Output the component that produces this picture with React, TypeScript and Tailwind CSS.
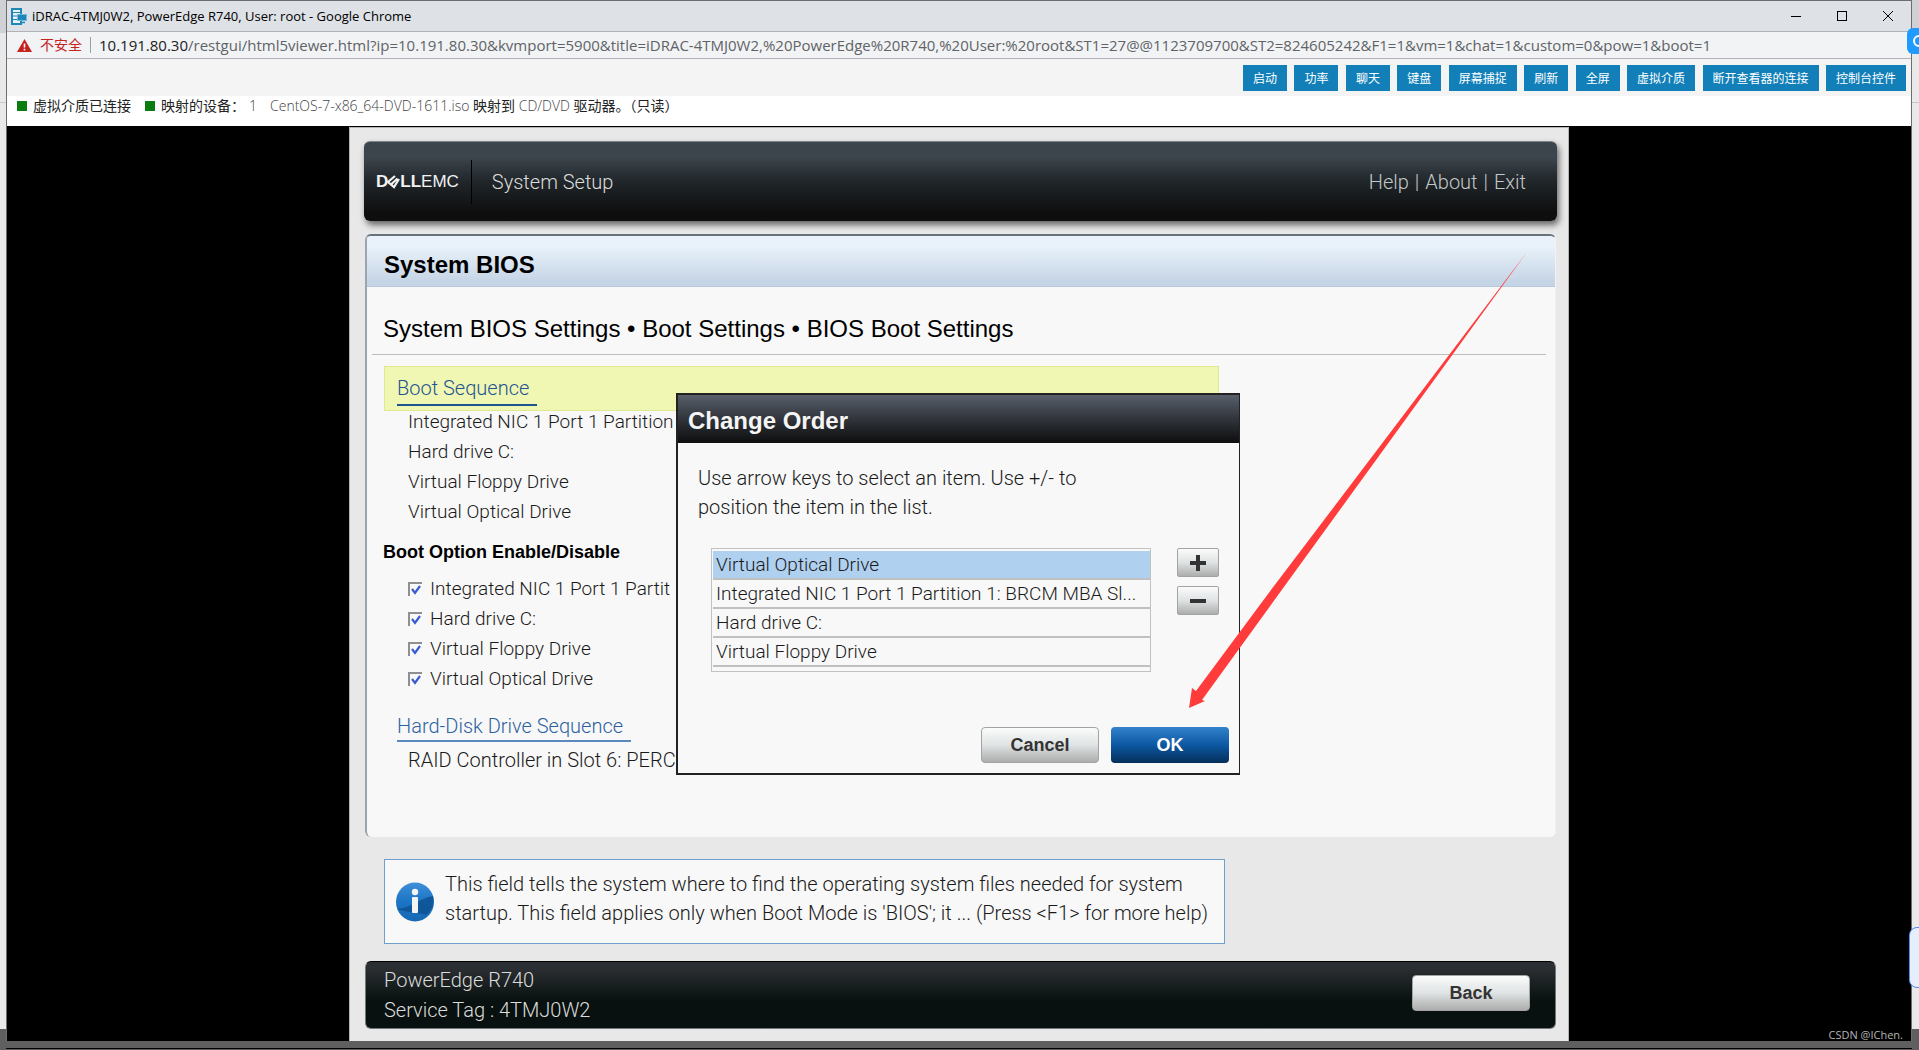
import React from "react";

const actions = ["启动", "功率", "聊天", "键盘", "屏幕捕捉", "刷新", "全屏", "虚拟介质", "断开查看器的连接", "控制台控件"];

const sequence = ["Integrated NIC 1 Port 1 Partition", "Hard drive C:", "Virtual Floppy Drive", "Virtual Optical Drive"];

const options = ["Integrated NIC 1 Port 1 Partit", "Hard drive C:", "Virtual Floppy Drive", "Virtual Optical Drive"];

const order = [
  "Virtual Optical Drive",
  "Integrated NIC 1 Port 1 Partition 1: BRCM MBA Sl...",
  "Hard drive C:",
  "Virtual Floppy Drive",
];

const silver =
  "border border-[#a3a3a3] bg-linear-to-b from-[#fbfbfb] via-[#dfe3e3] to-[#adadad]";

function TitleBar() {
  return (
    <header className="flex h-[30px] items-center bg-[#dee1e6] pl-1 text-black">
      <svg width="16" height="17" viewBox="0 0 16 17" aria-hidden="true">
        <path d="M1 1h9v15H1z" fill="#e9f4fa" stroke="#1f86b8" strokeWidth="2" />
        <path d="M2 4.500h7M2 8h5M2 11.500h5" stroke="#1f86b8" strokeWidth="1.200" />
        <rect x="6.500" y="6.500" width="9" height="6" fill="#1f86b8" stroke="#6db8dc" />
        <path d="M9 14.500h5" stroke="#1f86b8" strokeWidth="1.500" />
      </svg>
      <h1 className="ml-[5px] font-['Open_Sans','Noto_Sans_CJK_SC',sans-serif] text-[13px] leading-4">
        iDRAC-4TMJ0W2, PowerEdge R740, User: root - Google Chrome
      </h1>
      <div className="ml-auto flex">
        <button aria-label="Minimize" className="grid h-[30px] w-[46px] place-items-center">
          <svg width="10" height="10" viewBox="0 0 10 10"><path d="M0 5.500h10" stroke="#000" /></svg>
        </button>
        <button aria-label="Maximize" className="grid h-[30px] w-[46px] place-items-center">
          <svg width="10" height="10" viewBox="0 0 10 10"><rect x=".5" y=".5" width="9" height="9" fill="none" stroke="#000" /></svg>
        </button>
        <button aria-label="Close" className="grid h-[30px] w-[46px] place-items-center">
          <svg width="10" height="10" viewBox="0 0 10 10"><path d="M0 0l10 10M10 0L0 10" stroke="#000" /></svg>
        </button>
      </div>
    </header>
  );
}

function AddressBar() {
  return (
    <div className="flex h-[28px] items-center whitespace-nowrap border-y border-[#b0b2b5] bg-[#f1f3f4] pl-[10px] font-['Open_Sans','Noto_Sans_CJK_SC',sans-serif] text-[14px] leading-5">
      <svg width="15" height="13" viewBox="0 0 15 13" aria-hidden="true">
        <path d="M7.500 0L15 13H0z" fill="#c5221f" />
        <path d="M7.500 4.500v4M7.500 9.800v1.600" stroke="#fff" strokeWidth="1.600" />
      </svg>
      <span className="ml-2 text-[#c5221f]">不安全</span>
      <span className="mx-2 h-4 w-px bg-[#9aa0a6]" />
      <span className="text-[15px] text-[#5f6368]">
        <span className="text-[#202124]">10.191.80.30</span>
        /restgui/html5viewer.html?ip=10.191.80.30&amp;kvmport=5900&amp;title=iDRAC-4TMJ0W2,%20PowerEdge%20R740,%20User:%20root&amp;ST1=27@@1123709700&amp;ST2=824605242&amp;F1=1&amp;vm=1&amp;chat=1&amp;custom=0&amp;pow=1&amp;boot=1
      </span>
    </div>
  );
}

function Toolbar() {
  return (
    <nav className="flex h-[37px] justify-end bg-[#f4f4f4] pr-[5px] pt-[6px]">
      <div className="flex w-[663px] justify-between">
        {actions.map((a) => (
          <button key={a} className="h-[26px] bg-[#127fb9] px-[10px] font-['Noto_Sans_CJK_SC',sans-serif] text-[12px] leading-4 text-white">
            {a}
          </button>
        ))}
      </div>
    </nav>
  );
}

function MediaStatus() {
  return (
    <div className="flex h-[30px] bg-white pl-[10px] font-['Open_Sans','Noto_Sans_CJK_SC',sans-serif] text-[14px] leading-5 text-[#222]">
      <span className="mr-[6px] mt-[5px] size-[10px] bg-[#0b7d10]" />
      <span>虚拟介质已连接</span>
      <span className="ml-[14px] mr-[6px] mt-[5px] size-[10px] bg-[#0b7d10]" />
      <span>映射的设备：</span>
      <span className="ml-1 font-light text-[#444]">1</span>
      <span className="ml-[13px]">
        <span className="font-light text-[#444]">CentOS-7-x86_64-DVD-1611.iso</span> 映射到{" "}
        <span className="font-light text-[#444]">CD/DVD</span> 驱动器。（只读）
      </span>
    </div>
  );
}

function DellLogo() {
  return (
    <span aria-label="DELL EMC" className="flex items-center font-['Liberation_Sans',sans-serif] text-[17px] leading-5 text-[#f2f2f2]">
      <span className="font-bold">D</span>
      <svg width="16" height="14" viewBox="0 0 16 14" aria-hidden="true" className="-mx-0.5">
        <path d="M13 4L8 12L2 7L9 1M5 9.500L11.500 3.500" stroke="#f2f2f2" strokeWidth="2.200" fill="none" />
      </svg>
      <span className="font-bold">LL</span>
      <span className="font-normal">EMC</span>
    </span>
  );
}

function SetupHeader() {
  return (
    <div className="flex h-20 items-center rounded-md border-t border-[#7e8487] bg-linear-to-b from-[#3c454c] from-20% via-[#20262a] via-50% to-[#0e0e0e] to-90% pl-3 pr-[31px] text-[20px] leading-6 text-[#dcdcdc] shadow-[2px_4px_6px_#00000090]">
      <DellLogo />
      <span className="ml-3 h-11 w-px bg-black" />
      <span className="ml-5">System Setup</span>
      <nav className="ml-auto flex gap-[6px] text-[#c4c8c8]">
        <a href="#help">Help</a>|<a href="#about">About</a>|<a href="#exit">Exit</a>
      </nav>
    </div>
  );
}

function BiosPanel() {
  return (
    <section className="mx-px mt-[13px] h-[603px] overflow-hidden rounded-md border-l-2 border-r border-t-2 border-l-[#9aa5b0] border-r-[#f2f2f2] border-t-[#66727e] bg-[#f8f8f8]">
      <h2 className="flex h-[51px] items-center border-b border-[#b9c7da] bg-linear-to-b from-[#e9f2fa] from-20% to-[#c6d5e6] to-90% pl-[17px] pt-2 font-['Liberation_Sans',sans-serif] text-[24px] font-bold leading-7 text-black">
        System BIOS
      </h2>
      <h3 className="ml-[5px] mr-[9px] h-[68px] border-b border-[#bdbdbd] pl-[11px] pt-[28px] font-['Liberation_Sans',sans-serif] text-[24px] font-normal leading-7 text-black">
        System BIOS Settings • Boot Settings • BIOS Boot Settings
      </h3>
      <div className="ml-[17px] mr-[336px] mt-[11px] h-[45px] border border-[#dfe98f] bg-[#f0f7b2] pl-3 pt-[9px]">
        <a href="#boot-sequence" className="inline-block border-b-2 border-[#1d5491] pb-1 pr-2 leading-6 text-[#1d5491]">Boot Sequence</a>
      </div>
      <ul className="-mt-1 ml-[41px] whitespace-nowrap text-[19px] leading-[30px]">
        {sequence.map((s) => <li key={s}>{s}</li>)}
      </ul>
      <h4 className="ml-4 mt-[10px] font-['Liberation_Sans',sans-serif] text-[18px] font-bold leading-[30px] text-black">Boot Option Enable/Disable</h4>
      <div className="ml-[41px] mt-[7px] text-[19px]">
        {options.map((s, i) => (
          <label key={s} className="relative flex h-[30px] items-center gap-2 whitespace-nowrap">
            <input type="checkbox" defaultChecked name={`option-${i}`} className="peer sr-only" />
            <span className="grid size-[14px] shrink-0 place-items-center border-l-2 border-t-2 border-[#8f8f8f] text-transparent peer-checked:text-[#3a5bd0]">
              <svg width="10" height="10" viewBox="0 0 10 10" aria-hidden="true">
                <path d="M1 4L4 8L9 1" fill="none" stroke="currentColor" strokeWidth="2.200" />
              </svg>
            </span>
            {s}
          </label>
        ))}
      </div>
      <div className="ml-[30px] mt-[18px]">
        <a href="#hard-disk" className="inline-block border-b-2 border-[#5b88bd] pr-2 leading-7 text-[#2c629f]">Hard-Disk Drive Sequence</a>
      </div>
      <p className="ml-[41px] mt-[3px] whitespace-nowrap leading-[30px]">RAID Controller in Slot 6: PERC</p>
    </section>
  );
}

function HelpBox() {
  return (
    <aside className="ml-5 mr-[332px] mt-[22px] flex h-[85px] items-center border border-[#6f9fcb] bg-[#f8f8f8] pl-[11px]">
      <svg width="38" height="40" viewBox="0 0 38 40" aria-hidden="true" className="shrink-0">
        <defs>
          <linearGradient id="ball" x1="0" y1="0" x2="0" y2="1">
            <stop offset="0" stopColor="#3e8fd8" />
            <stop offset=".5" stopColor="#1b74c4" />
            <stop offset="1" stopColor="#1768b4" />
          </linearGradient>
        </defs>
        <ellipse cx="19" cy="20" rx="19" ry="19.500" fill="url(#ball)" />
        <path d="M1 27C16 26 24 16 37 14C39 24 34 30 30 33C20 30 8 30 1 27z" fill="#0c4f90" opacity=".8" />
        <circle cx="19" cy="10" r="3.200" fill="#f4f4f4" />
        <rect x="16" y="15" width="6" height="16" rx="1" fill="#f4f4f4" />
      </svg>
      <p className="-mt-[6px] ml-[11px] leading-[29px]">
        This field tells the system where to find the operating system files needed for system<br />
        startup. This field applies only when Boot Mode is 'BIOS'; it ... (Press &lt;F1&gt; for more help)
      </p>
    </aside>
  );
}

function SetupFooter() {
  return (
    <footer className="mx-px mt-[17px] flex h-[68px] items-center rounded-md border border-[#70787a] border-t-black bg-linear-to-b from-[#2b2e32] from-10% to-[#08110f] to-60% pl-[18px] pr-[25px] text-[#dcdcdc]">
      <p className="leading-[30px]">
        PowerEdge R740<br />Service Tag : 4TMJ0W2
      </p>
      <button className={`mb-1 ml-auto h-9 w-[118px] rounded-sm font-['Liberation_Sans',sans-serif] text-[18px] font-bold leading-6 text-[#333] ${silver}`}>Back</button>
    </footer>
  );
}

function ChangeOrderDialog() {
  return (
    <div role="dialog" aria-label="Change Order" className="absolute left-[326px] top-[265px] w-[564px] border-2 border-r border-[#222] bg-[#f8f8f8]">
      <h2 className="flex h-12 items-center bg-linear-to-b from-[#59606c] to-[#0d0e0f] pl-[10px] pt-1 font-['Liberation_Sans',sans-serif] text-[24px] font-bold leading-7 text-[#f5f5f5]">
        Change Order
      </h2>
      <p className="ml-5 mt-[21px] leading-[29px]">
        Use arrow keys to select an item. Use +/- to<br />position the item in the list.
      </p>
      <div className="ml-[33px] mr-5 mt-[26px] flex items-start justify-between">
        <ul className="w-[440px] border border-[#c2c2c2] pb-1 pl-px pt-[2px] text-[19px]">
          {order.map((o, i) => (
            <li key={o} className={`h-[29px] whitespace-nowrap border-b-2 border-[#c0c0c0] px-[3px] leading-[27px] ${i === 0 ? "bg-[#b0d0ef]" : ""}`}>{o}</li>
          ))}
        </ul>
        <div className="flex flex-col gap-[9px]">
          <button aria-label="Move up" className={`grid h-[29px] w-[42px] place-items-center rounded-xs ${silver}`}>
            <svg width="16" height="16" viewBox="0 0 16 16"><path d="M0 8h16M8 0v16" stroke="#333" strokeWidth="4" /></svg>
          </button>
          <button aria-label="Move down" className={`grid h-[29px] w-[42px] place-items-center rounded-xs ${silver}`}>
            <svg width="16" height="16" viewBox="0 0 16 16"><path d="M0 8h16" stroke="#333" strokeWidth="4" /></svg>
          </button>
        </div>
      </div>
      <div className="mb-[10px] mr-[10px] mt-[55px] flex justify-end gap-3 font-['Liberation_Sans',sans-serif] text-[18px] font-bold leading-6">
        <button className={`h-9 w-[118px] rounded-sm text-[#333] ${silver}`}>Cancel</button>
        <button className="h-9 w-[118px] rounded-sm bg-linear-to-b from-[#3282cc] via-[#0c58a3] to-[#062f5a] text-white">OK</button>
      </div>
    </div>
  );
}

function Pointer() {
  return (
    <svg className="pointer-events-none absolute left-[839px] top-[124px]" width="338" height="456" viewBox="0 0 338 456" aria-hidden="true">
      <path d="M338 0L84 350L13 448L16 449L0 456L3 436L7 439L79 342z" fill="#ff3b3b" />
    </svg>
  );
}

export default function App() {
  return (
    <div className="relative min-h-screen overflow-hidden bg-[linear-gradient(#cfd1d5_33px,#e9e9e9_33px,#e9e9e9_102px,#c8c8c8_102px,#c8c8c8_103px,#e9e9e9_103px,#e9e9e9_1029px,#5f5f5f_1029px)] pl-[6px] pr-[7px]">
      <div className="border border-b-0 border-[#6b6d70]">
        <TitleBar />
        <AddressBar />
        <Toolbar />
        <MediaStatus />
        <main className="flex justify-center bg-black pt-px">
          <div className="relative w-full max-w-[1220px] border-x border-t border-[#b5b5b5] bg-[#e8e8e8] pb-[12px] pl-[14px] pr-[11px] pt-[13px] font-['Roboto',sans-serif] text-[20px] font-light leading-6 text-[#1a1a1a]">
            <SetupHeader />
            <BiosPanel />
            <HelpBox />
            <SetupFooter />
            <ChangeOrderDialog />
            <Pointer />
          </div>
        </main>
      </div>
      <div className="h-2 border-b border-black bg-[#5f5f5f]" />
      <span className="absolute bottom-[7px] right-4 font-['Open_Sans',sans-serif] text-[11px] leading-4 text-[#b5b5b5]">CSDN @IChen.</span>
      <div className="absolute -right-3 top-7 grid h-[26px] w-6 place-items-start rounded-md bg-[#1f9bff] pl-[6px] pt-[7px]">
        <span className="size-3 rounded-full border-2 border-white" />
      </div>
      <div className="absolute -right-2 top-[927px] h-[61px] w-[18px] rounded-lg border border-[#4c8df6] bg-[#e6eefc]" />
    </div>
  );
}
